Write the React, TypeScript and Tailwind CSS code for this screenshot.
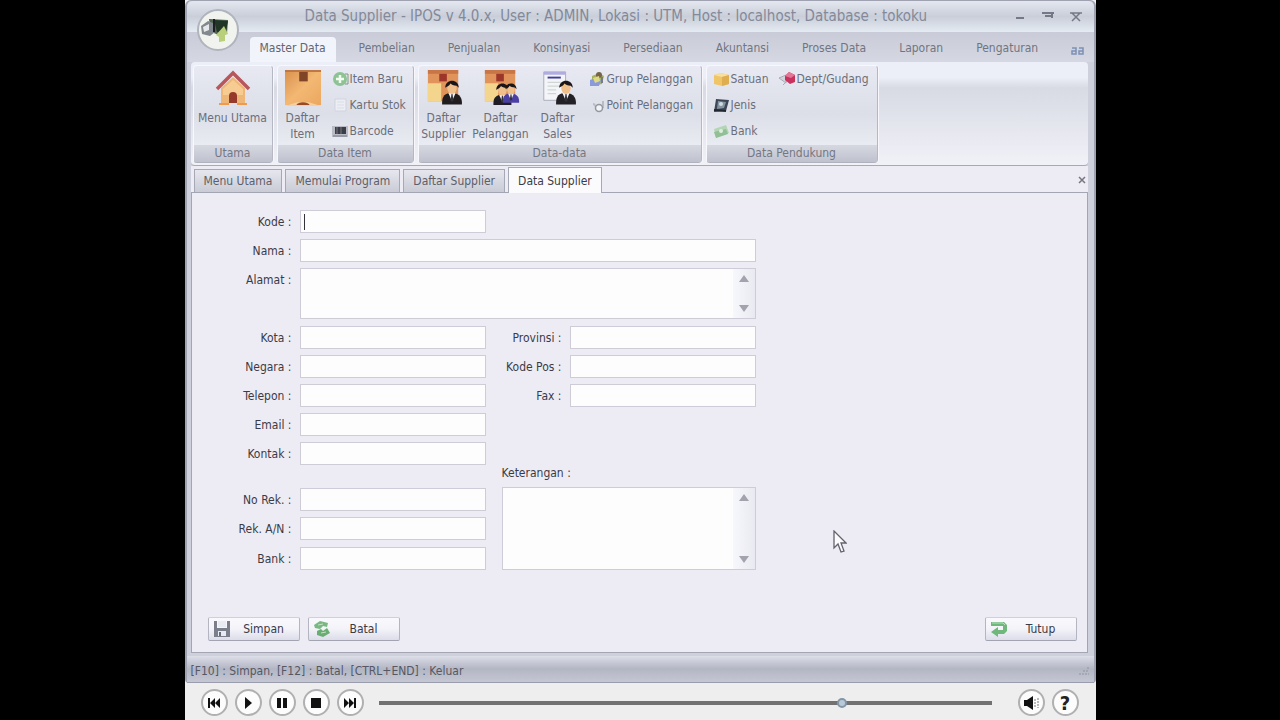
import type { ReactNode } from "react";

const menus = ["Pembelian", "Penjualan", "Konsinyasi", "Persediaan", "Akuntansi", "Proses Data", "Laporan", "Pengaturan"];
const documents = ["Menu Utama", "Memulai Program", "Daftar Supplier"];

function House() {
  return (
    <svg viewBox="0 0 36 36" className="size-9">
      <path d="M6 18 18 7l12 11v15H6z" fill="#efb777" />
      <path d="M8 19 18 10l10 9v6H8z" fill="#f7cc92" />
      <path d="M2 19 18 3l16 16" fill="none" stroke="#b8565c" strokeWidth="3.5" />
      <path d="M14 33v-7a4 4 0 0 1 8 0v7z" fill="#963a2c" />
      <path d="M4 34h10M22 34h10" stroke="#f09a4e" strokeWidth="2" />
    </svg>
  );
}

function Carton() {
  return (
    <svg viewBox="0 0 38 38" className="h-9 w-[38px]">
      <defs>
        <linearGradient id="carton" x1="0" y1="0" x2="1" y2="1">
          <stop offset="0" stopColor="#d98f4e" />
          <stop offset=".5" stopColor="#f3b873" />
          <stop offset="1" stopColor="#eba75f" />
        </linearGradient>
      </defs>
      <rect x="0" y="0" width="38" height="37" fill="url(#carton)" />
      <path d="M0 0h38v2H0z" fill="#bd7843" />
      <rect x="15" y="2" width="9" height="10" fill="#7f4526" />
      <path d="M0 38 13 34h12l13 4z" fill="#f6cf9c" />
      <path d="M12 37c2-4 12-4 14 0z" fill="#9c4a22" />
    </svg>
  );
}

function Person({ x, y, suit, scale = 1 }: { x: number; y: number; suit: string; scale?: number }) {
  return (
    <g transform={`translate(${x} ${y}) scale(${scale})`}>
      <path d="M0 21c0-6 3-9 9-9s10 3 10 9v2H0z" fill={suit} />
      <path d="m6 12 3.500 8 3.500-8z" fill="#f4f2f5" />
      <path d="m9 13-1 7h3l-1-7z" fill="#33303a" />
      <ellipse cx="9.500" cy="7.500" rx="4.500" ry="5.500" fill="#efc08c" />
      <path d="M3 7c0-9 13-9 13 0l-2-2c-3 0-5-1-6-2-1 2-3 3-5 4z" fill="#191519" />
    </g>
  );
}

function SupplierIcon({ pair = false }: { pair?: boolean }) {
  return (
    <svg viewBox="0 0 38 38" className="h-9 w-[38px]">
      <rect x="2" y="0" width="32" height="33" fill="#e0935a" />
      <path d="M2 14h14v19H2z" fill="#f3d58e" />
      <path d="M2 0h32v4H2z" fill="#c87547" />
      <rect x="14" y="4" width="8" height="8" fill="#9c352a" />
      {pair ? (
        <>
          <Person x={11} y={14} suit="#211d26" />
          <Person x={21} y={14} suit="#4a3fa5" scale={0.9} />
        </>
      ) : (
        <Person x={17} y={11} suit="#211d1f" scale={1.1} />
      )}
    </svg>
  );
}

function SalesIcon() {
  return (
    <svg viewBox="0 0 38 38" className="h-9 w-[38px]">
      <path d="M4 2h23v30H4z" fill="#f4f5f8" stroke="#a8abb8" />
      <path d="M4 2h23v3H4z" fill="#b1ace0" />
      <path d="M8 8h14" stroke="#3f3e98" strokeWidth="2" />
      <path d="M8 13h14M8 17h14M8 21h9M8 25h9" stroke="#c4ccc8" />
      <Person x={17} y={11} suit="#232126" scale={1.1} />
    </svg>
  );
}

const small: Record<string, ReactNode> = {
  add: (
    <>
      <circle cx="8" cy="8" r="7" fill="#8dc393" />
      <path d="M8 4v8M4 8h8" stroke="#f2faf2" strokeWidth="2.500" />
      <path d="M13 3h3v10h-3" fill="none" stroke="#829488" />
    </>
  ),
  card: (
    <>
      <path d="M3 2h11v12H3z" fill="#eceef4" stroke="#d0d3de" />
      <path d="M5 5h7M5 8h7M5 11h7" stroke="#dadde6" />
    </>
  ),
  barcode: (
    <>
      <rect x="0" y="3" width="16" height="11" fill="#b9bcc5" />
      <rect x="3" y="4" width="11" height="7" fill="#3c3e46" />
      <path d="M1 13h14M5 4v7M9 4v7" stroke="#777b85" />
    </>
  ),
  group: (
    <>
      <path d="m3 5 7-3 5 3-2 8-10 2z" fill="#a9b35f" />
      <circle cx="10" cy="4" r="3" fill="#75634b" />
      <path d="m1 9 8-3 3 3-2 6H1z" fill="#8a9bdb" />
      <path d="m4 7 6-2 1 5-5 2z" fill="#e0da85" />
      <path d="M13 6v6" stroke="#777a87" strokeWidth="2" />
    </>
  ),
  point: (
    <>
      <path d="M4 7c3 0 1 3 4 3M14 4v7" fill="none" stroke="#b8bcc6" strokeWidth="2" />
      <circle cx="10" cy="11" r="3.500" fill="#f3f4f7" stroke="#93979f" strokeWidth="1.500" />
    </>
  ),
  box: (
    <>
      <path d="m1 4 7-2 8 2v9l-7 2-8-2z" fill="#efc568" />
      <path d="m1 4 8 2 7-2-8-2z" fill="#f8dfa0" />
      <path d="M9 6v9l7-2V4z" fill="#dfae51" />
    </>
  ),
  kind: (
    <>
      <path d="m3 2 13 1-3 11-12 1z" fill="#3c4656" />
      <path d="m5 4 8 1-2 6-7 1z" fill="#8495a4" />
      <circle cx="8" cy="7" r="2" fill="#d0dce1" />
      <path d="m1 13 12 1" stroke="#22262e" strokeWidth="2" />
    </>
  ),
  bank: (
    <>
      <path d="m1 6 12-4 3 8-13 5z" fill="#b3d5b4" />
      <path d="m1 9 12-3 2 5-12 4z" fill="#92bf96" />
      <circle cx="8" cy="8" r="2" fill="#dcefdc" />
    </>
  ),
  dept: (
    <>
      <path d="m0 7 7-3v8zM4 14l4-4" fill="#d3d5dc" stroke="#a9acb7" />
      <path d="m6 5 4-4 6 3v7l-5 2-5-4z" fill="#c8325f" />
      <path d="m10 1 6 3-4 3-6-2z" fill="#e37795" />
    </>
  ),
};

function SmallItem({ icon, label }: { icon: string; label: string }) {
  return (
    <button className="flex h-[26px] items-center gap-px whitespace-nowrap text-left">
      <svg viewBox="0 0 17 16" className="h-4 w-[17px] shrink-0">{small[icon]}</svg>
      {label}
    </button>
  );
}

function LargeItem({ icon, label, width }: { icon: ReactNode; label: string; width: string }) {
  return (
    <button className={`flex flex-col items-center pt-1 text-center leading-4 ${width}`}>
      {icon}
      <span className="mt-1">{label}</span>
    </button>
  );
}

function Group({ title, width, children }: { title: string; width: string; children: ReactNode }) {
  return (
    <section className={`flex shrink-0 flex-col rounded-sm border border-t-[#f7f7fc] border-r-[#b5b7c3] border-b-[#b0b3bf] border-l-[#f7f7fc] bg-linear-to-b from-[#e8e9f2] via-[#dcdfe8] to-[#f1f2f8] shadow-[1px_0_0_#f7f7fc] ${width}`}>
      <div className="flex flex-1 items-start">{children}</div>
      <h2 className="h-[17px] bg-linear-to-b from-[#d6d8e1] to-[#bfc2ce] text-center leading-4 text-[#747783]">{title}</h2>
    </section>
  );
}

const box = "h-[23px] w-full border border-[#cdccd7] bg-[#fdfdfe] px-1 outline-none";

function Field({ id, label, wide = false, focused = false }: { id: string; label: string; wide?: boolean; focused?: boolean }) {
  return (
    <>
      <label htmlFor={id} className="pt-px text-right whitespace-nowrap">{label} :</label>
      <div className={`relative ${wide ? "col-span-3" : ""}`}>
        <input id={id} className={`block caret-transparent ${box}`} />
        {focused && <span className="pointer-events-none absolute top-1 left-1 h-4 w-px bg-[#33333b]" />}
      </div>
    </>
  );
}

function Area({ id, height }: { id: string; height: string }) {
  return (
    <div className={`flex w-full border border-[#cdccd7] bg-[#fdfdfe] ${height}`}>
      <textarea id={id} className="min-w-0 flex-1 resize-none bg-transparent px-1 outline-none" />
      <div className="flex w-[22px] flex-col items-center justify-between bg-linear-to-r from-[#f7f8fc] to-[#e9e9f1] py-1.5">
        <svg viewBox="0 0 10 7" className="h-[7px] w-2.5"><path d="m5 0 5 7H0z" fill="#a3a3ae" /></svg>
        <svg viewBox="0 0 10 7" className="h-[7px] w-2.5"><path d="m5 7 5-7H0z" fill="#a3a3ae" /></svg>
      </div>
    </div>
  );
}

function ActionButton({ label, children }: { label: string; children: ReactNode }) {
  return (
    <button className="flex h-6 w-[92px] items-center rounded-xs border border-t-[#cfd0da] border-r-[#b3b5c0] border-b-[#a2a5b1] border-l-[#b3b5c0] bg-linear-to-b from-[#f9f9fd] via-[#f3f3f9] to-[#dcdde9] pl-1">
      <svg viewBox="0 0 18 18" className="size-[18px] shrink-0">{children}</svg>
      <span className="flex-1 pr-0.5 text-center">{label}</span>
    </button>
  );
}

function PlayerButton({ label, children }: { label: string; children: ReactNode }) {
  return (
    <button aria-label={label} className="flex size-[27px] shrink-0 items-center justify-center rounded-full border-2 border-[#b0b0b2] bg-[#fcfcfc]">
      <svg viewBox="0 0 18 18" className="size-[18px]" fill="#111">{children}</svg>
    </button>
  );
}

export default function App() {
  return (
    <div className="flex min-h-screen justify-center bg-black font-['DejaVu_Sans_Condensed','DejaVu_Sans',sans-serif] text-xs text-[#3b3b45]">
      <div className="flex w-full max-w-[911px] flex-col bg-[#eeeeef]">
        <div className="relative flex flex-1 flex-col rounded-t-md rounded-b-sm border-x-2 border-t border-[#9fa3b1] bg-[#ced1dc]">
          <header className="flex h-[31px] items-center rounded-t-md bg-linear-to-b from-[#e4e7ef] via-[#c9ced9] to-[#e5ebf2] pr-2.5 pl-[118px]">
            <h1 className="flex-1 truncate text-[15px] text-[#83899a]">
              Data Supplier - IPOS v 4.0.x, User : ADMIN, Lokasi : UTM, Host : localhost, Database : tokoku
            </h1>
            <div className="flex gap-3 text-[#747987]">
              <button aria-label="Minimize"><svg viewBox="0 0 16 14" className="h-3.5 w-4"><path d="M4 8h8" stroke="currentColor" strokeWidth="2" /></svg></button>
              <button aria-label="Maximize"><svg viewBox="0 0 16 14" className="h-3.5 w-4"><path d="M2 3h12M12 4v4M5 6h6" fill="none" stroke="currentColor" strokeWidth="2" /></svg></button>
              <button aria-label="Close"><svg viewBox="0 0 16 14" className="h-3.5 w-4"><path d="m4 3 8 8m0-8-8 8M2 3h12" stroke="currentColor" strokeWidth="1.500" /></svg></button>
            </div>
          </header>

          <button aria-label="Application menu" className="absolute top-2 left-2.5 size-[42px] rounded-full border-2 border-[#b0b4bd] bg-[#f1f3ef]">
            <svg viewBox="0 0 38 38" className="size-full">
              <path d="m10 8 19 1-1 14-8 1-8-3z" fill="#4f6353" />
              <path d="m15 9 14 1-2 10-9 1z" fill="#213626" />
              <path d="m2 15 7-5 7 3v8l-5 4-8-2z" fill="#81898e" />
              <path d="m4 16 6-3v6l-5 2z" fill="#e5e8eb" />
              <path d="M15 8v13" stroke="#1d2023" strokeWidth="2" />
              <path d="m25 15 4 8-3 1v6l-6 1v-5l-3-2z" fill="#b9cf7c" />
            </svg>
          </button>

          <nav className="flex h-[30px] items-end gap-[13px] bg-linear-to-b from-[#c9ccd8] to-[#d5d8e2] pr-2 pl-[63px] text-[#717582]">
            <a href="#master" className="h-[25px] rounded-t-sm bg-[#f2f4fb] px-2.5 leading-[23px] text-[#626571]">Master Data</a>
            {menus.map((m) => (
              <a key={m} href="#menu" className="h-[25px] px-2.5 leading-[23px] whitespace-nowrap">{m}</a>
            ))}
            <button aria-label="More" className="ml-auto flex h-[25px] items-center">
              <svg viewBox="0 0 16 12" className="h-3 w-4" fill="none" stroke="#7c90b5" strokeWidth="1.500">
                <path d="M2 4h4v6H2V7h4M9 4h4v6H9V7h4" />
              </svg>
            </button>
          </nav>

          <div className="mr-1.5 ml-1 flex h-[104px] gap-1 rounded-sm border-b border-[#a6a9b7] bg-linear-to-b from-[#eceff8] from-15% via-[#d8dae4] via-25% to-[#f1f2f8] px-0.5 pt-[3px] pb-0.5 text-[#6b6e7a]">
            <Group title="Utama" width="w-20">
              <LargeItem icon={<House />} label="Menu Utama" width="w-full" />
            </Group>
            <Group title="Data Item" width="w-[137px]">
              <LargeItem icon={<Carton />} label="Daftar Item" width="w-[50px]" />
              <div className="flex flex-col pl-1">
                <SmallItem icon="add" label="Item Baru" />
                <SmallItem icon="card" label="Kartu Stok" />
                <SmallItem icon="barcode" label="Barcode" />
              </div>
            </Group>
            <Group title="Data-data" width="w-[284px]">
              <LargeItem icon={<SupplierIcon />} label="Daftar Supplier" width="w-[50px]" />
              <LargeItem icon={<SupplierIcon pair />} label="Daftar Pelanggan" width="w-16" />
              <LargeItem icon={<SalesIcon />} label="Daftar Sales" width="w-[50px]" />
              <div className="flex flex-col pl-1.5">
                <SmallItem icon="group" label="Grup Pelanggan" />
                <SmallItem icon="point" label="Point Pelanggan" />
              </div>
            </Group>
            <Group title="Data Pendukung" width="w-[172px]">
              <div className="flex w-[72px] flex-col pl-1.5">
                <SmallItem icon="box" label="Satuan" />
                <SmallItem icon="kind" label="Jenis" />
                <SmallItem icon="bank" label="Bank" />
              </div>
              <SmallItem icon="dept" label="Dept/Gudang" />
            </Group>
          </div>

          <main className="mr-1.5 ml-1 flex flex-1 flex-col">
            <div className="flex h-[26px] items-end gap-[3px] bg-[#edecf5] pr-0.5 pl-[3px]">
              {documents.map((d) => (
                <button key={d} className="h-[23px] border border-b-0 border-[#a5a8b5] bg-linear-to-b from-[#e6e7ee] to-[#c9cbd6] px-[9px] whitespace-nowrap text-[#5c5e69]">{d}</button>
              ))}
              <button className="z-10 -mb-px h-[26px] border border-b-0 border-[#a5a8b5] bg-[#fbfbfe] px-[9px] whitespace-nowrap">Data Supplier</button>
              <button aria-label="Close tab" className="mb-2 ml-auto">
                <svg viewBox="0 0 8 8" className="size-2"><path d="m1 1 6 6m0-6L1 7" stroke="#747682" strokeWidth="1.500" /></svg>
              </button>
            </div>

            <form className="relative flex flex-1 flex-col border border-[#a3a5b3] bg-[#edecf5] pt-[17px] pb-[11px]" onSubmit={(e) => e.preventDefault()}>
              <div className="grid grid-cols-[100px_186px_68px_186px] items-center gap-x-2 gap-y-1.5">
                <Field id="kode" label="Kode" focused />
                <span className="col-span-2" />
                <Field id="nama" label="Nama" wide />
                <label htmlFor="alamat" className="self-start pt-1 text-right">Alamat :</label>
                <div className="col-span-3"><Area id="alamat" height="h-[51px]" /></div>
              </div>
              <div className="mt-[7px] grid grid-cols-[100px_186px_68px_186px] items-center gap-x-2 gap-y-1.5">
                <Field id="kota" label="Kota" />
                <Field id="provinsi" label="Provinsi" />
                <Field id="negara" label="Negara" />
                <Field id="kodepos" label="Kode Pos" />
                <Field id="telepon" label="Telepon" />
                <Field id="fax" label="Fax" />
                <Field id="email" label="Email" />
                <span className="col-span-2" />
                <Field id="kontak" label="Kontak" />
              </div>
              <div className="flex gap-4">
                <div className="grid grid-cols-[100px_186px] items-center gap-x-2 gap-y-1.5 pt-[23px]">
                  <Field id="norek" label="No Rek." />
                  <Field id="rekan" label="Rek. A/N" />
                  <Field id="bank" label="Bank" />
                </div>
                <div className="flex w-[254px] flex-col gap-1.5">
                  <label htmlFor="keterangan">Keterangan :</label>
                  <Area id="keterangan" height="h-[83px]" />
                </div>
              </div>
              <div className="mt-auto flex gap-2 pr-2.5 pl-4 pt-4">
                <ActionButton label="Simpan">
                  <path d="M1 1h3v7h10V1h3v16H1z" fill="#7b7f8c" />
                  <path d="M5 1h8v6H5zM5 11h8v5H5z" fill="#e9ebf2" />
                  <path d="M6 12h2v4H6z" fill="#696d7a" />
                </ActionButton>
                <ActionButton label="Batal">
                  <path d="m1 5 6-4 8 2-1 4-4-1-3 3-5-1z" fill="#79b981" />
                  <path d="m4 11 4-2 2 2 4-3 3 5-7 4-6-2z" fill="#69ad73" />
                  <path d="m5 5 5-1M8 13l5-1" stroke="#c3e3c7" />
                </ActionButton>
                <div className="ml-auto">
                  <ActionButton label="Tutup">
                    <path d="M1 2h13l3 3v6l-3 3H8v3l-7-5 7-5v3h5V6H1z" fill="#6fb77a" />
                    <path d="M2 3h11l2 2" fill="none" stroke="#b9dfbe" />
                  </ActionButton>
                </div>
              </div>
              <svg viewBox="0 0 14 24" className="pointer-events-none absolute top-[337px] left-[641px] h-6 w-3.5">
                <path d="M1 1v17l4-4 3 8 3-1-3-8h5z" fill="#fbfbfd" stroke="#63636e" strokeWidth="1.300" />
              </svg>
            </form>
          </main>

          <footer className="mt-[3px] flex h-[27px] items-center justify-between border-b border-[#9a9eac] bg-linear-to-b from-[#dcdee8] via-[#b2b5c3] to-[#c5c8d3] px-1 pt-[3px] text-[#555864]">
            <span>[F10] : Simpan, [F12] : Batal, [CTRL+END] : Keluar</span>
            <svg viewBox="0 0 12 12" className="size-3"><path d="M9 3h2M5 6h6M1 9h10" stroke="#8f93a1" strokeDasharray="2 1" /></svg>
          </footer>
        </div>

        <div className="flex h-[37px] items-center gap-[7px] pt-0.5 pr-[17px] pl-4">
          <PlayerButton label="Previous"><path d="M3 4h2v10H3zM10 4v10L5 9zM15 4v10l-5-5z" /></PlayerButton>
          <PlayerButton label="Play"><path d="m6 3 7 6-7 6z" /></PlayerButton>
          <PlayerButton label="Pause"><path d="M4 4h4v10H4zM10 4h4v10h-4z" /></PlayerButton>
          <PlayerButton label="Stop"><path d="M4 4h10v10H4z" /></PlayerButton>
          <PlayerButton label="Next"><path d="M13 4h2v10h-2zM8 4v10l5-5zM3 4v10l5-5z" /></PlayerButton>
          <input
            type="range"
            aria-label="Position"
            defaultValue={76}
            className="mx-2 h-3 min-w-0 flex-1 appearance-none bg-[linear-gradient(#727272,#727272)] bg-[length:100%_4px] bg-center bg-no-repeat [&::-webkit-slider-thumb]:size-2.5 [&::-webkit-slider-thumb]:appearance-none [&::-webkit-slider-thumb]:rounded-full [&::-webkit-slider-thumb]:border-2 [&::-webkit-slider-thumb]:border-[#8296a8] [&::-webkit-slider-thumb]:bg-[#b9c9d6]"
          />
          <span className="w-1" />
          <PlayerButton label="Volume"><path d="M2 6h3l6-4v14l-6-4H2z" /><path d="M13 5v8M16 4v10" stroke="#777" strokeDasharray="2 1" /></PlayerButton>
          <button aria-label="Help" className="flex size-[27px] shrink-0 items-center justify-center rounded-full border-2 border-[#b0b0b2] bg-[#fcfcfc] text-xl font-bold text-[#222]">?</button>
        </div>
      </div>
    </div>
  );
}
